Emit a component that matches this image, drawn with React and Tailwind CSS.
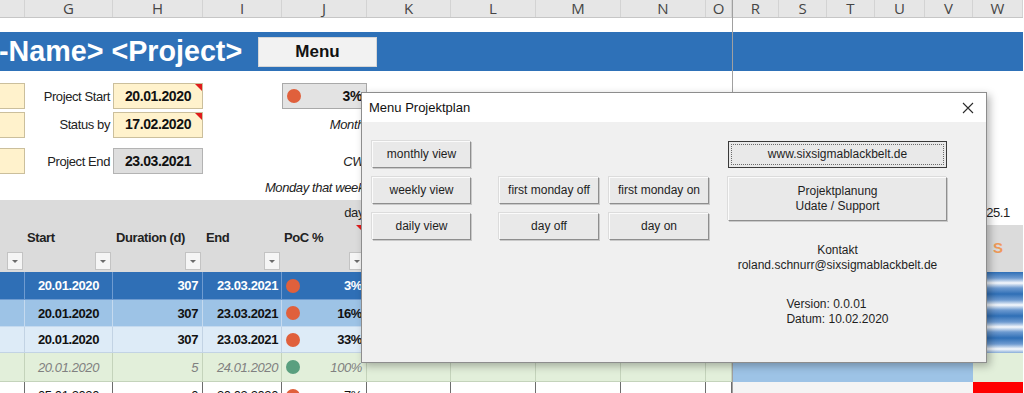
import clsx from "clsx";

const LEFT_COLS = [
  { id: "F", w: "w-[25px]" },
  { id: "G", w: "w-[88px]" },
  { id: "H", w: "w-[90px]" },
  { id: "I", w: "w-[79px]" },
  { id: "J", w: "w-[85px]" },
  { id: "K", w: "w-[84px]" },
  { id: "L", w: "w-[85px]" },
  { id: "M", w: "w-[85px]" },
  { id: "N", w: "w-[85px]" },
  { id: "O", w: "w-[26px]" },
];

const RIGHT_COLS = [
  { id: "R", w: "w-[46px]" },
  { id: "S", w: "w-[48px]" },
  { id: "T", w: "w-[48px]" },
  { id: "U", w: "w-[50px]" },
  { id: "V", w: "w-[48px]" },
  { id: "W", w: "w-[50px]" },
];

const ROWS = [
  {
    h: "h-[28px]",
    bg: "bg-[#2f6fb6]",
    line: "border-[#6f9bd0]",
    text: "text-white font-bold",
    start: "20.01.2020",
    dur: "307",
    end: "23.03.2021",
    dot: "bg-[#e0603c]",
    poc: "3%",
  },
  {
    h: "h-[27px]",
    bg: "bg-[#9dc3e6]",
    line: "border-[#c5daef]",
    text: "text-[#111] font-bold",
    start: "20.01.2020",
    dur: "307",
    end: "23.03.2021",
    dot: "bg-[#e0603c]",
    poc: "16%",
  },
  {
    h: "h-[26px]",
    bg: "bg-[#ddebf7]",
    line: "border-[#c2d3e4]",
    text: "text-[#111] font-bold",
    start: "20.01.2020",
    dur: "307",
    end: "23.03.2021",
    dot: "bg-[#e0603c]",
    poc: "33%",
  },
  {
    h: "h-[29px]",
    bg: "bg-[#e2efda]",
    line: "border-[#c4d3bb]",
    text: "text-[#808080] italic",
    start: "20.01.2020",
    dur: "5",
    end: "24.01.2020",
    dot: "bg-[#5a9f7f]",
    poc: "100%",
  },
  {
    h: "h-[28px]",
    bg: "bg-white",
    line: "border-[#6d6d6d]",
    text: "text-[#111]",
    start: "05.01.2020",
    dur: "0",
    end: "30.03.2020",
    dot: "bg-[#e0603c]",
    poc: "7%",
  },
];

const XL = "text-[13px] tracking-[-0.4px] leading-none";

function ColHeader({ cols }) {
  return (
    <div className="flex h-[18px] bg-[#e6e6e6] border-b border-[#c6c6c6]">
      {cols.map((c) => (
        <div
          key={c.id}
          className={clsx(
            c.w,
            "shrink-0 border-r border-[#d3d3d3] flex items-center justify-center text-[15px] leading-[17px] text-[#454545] font-['Open_Sans',sans-serif]"
          )}
        >
          {c.id === "F" ? "" : c.id}
        </div>
      ))}
    </div>
  );
}

function Flag() {
  return (
    <span className="absolute right-0 top-0 w-0 h-0 border-t-[7px] border-l-[7px] border-t-[#e01b1b] border-l-transparent" />
  );
}

function Box({ className, children, flag }) {
  return (
    <div
      className={clsx(
        "relative shrink-0 h-[26px] flex items-center justify-center border",
        className
      )}
    >
      {children}
      {flag && <Flag />}
    </div>
  );
}

function Label({ children }) {
  return (
    <div className={clsx("w-[88px] shrink-0 text-right pr-[3px] text-[#222]", XL)}>
      {children}
    </div>
  );
}

function FilterBtn() {
  return (
    <div className="w-[16px] h-[18px] bg-[#f5f5f5] border border-[#c3c3c3] flex items-center justify-center">
      <span className="w-0 h-0 border-l-[3px] border-r-[3px] border-t-[3px] border-l-transparent border-r-transparent border-t-[#6b6b6b]" />
    </div>
  );
}

function DataRow({ r }) {
  return (
    <div className={clsx("flex border-b", r.h, r.bg, r.line, r.text, XL)}>
      {LEFT_COLS.map((c, i) => (
        <div
          key={c.id}
          className={clsx(
            c.w,
            "shrink-0 h-full border-r flex items-center",
            r.line,
            i === 1 && "justify-center",
            i === 2 && "justify-end pr-[4px]",
            i === 3 && "justify-end pr-[3px]",
            i === 4 && "justify-between pl-[4px] pr-[4px]"
          )}
        >
          {i === 1 && r.start}
          {i === 2 && r.dur}
          {i === 3 && r.end}
          {i === 4 && (
            <>
              <span className={clsx("w-[14px] h-[14px] rounded-full", r.dot)} />
              <span>{r.poc}</span>
            </>
          )}
        </div>
      ))}
    </div>
  );
}

function WinButton({ className, children, focused }) {
  return (
    <div
      className={clsx(
        "relative flex items-center justify-center text-center bg-[#e9e9e9] text-[12px] leading-[15px] text-[#1e1e1e]",
        focused
          ? "border border-[#3a3a3a]"
          : "border border-t-[#fbfbfb] border-l-[#fbfbfb] border-r-[#8e8e8e] border-b-[#8e8e8e] shadow-[1px_1px_0_#c9c9c9,-1px_-1px_0_#dcdcdc]",
        className
      )}
    >
      {focused && (
        <span className="absolute inset-[2px] border border-dotted border-[#6a6a6a]" />
      )}
      <span className="relative">{children}</span>
    </div>
  );
}

function Dialog() {
  return (
    <div className="absolute left-[361px] top-[92px] w-[626px] h-[271px] bg-[#f0f0f0] border border-[#8d8d8d] shadow-[3px_3px_8px_rgba(0,0,0,0.28)]">
      <div className="h-[29px] bg-white flex items-center justify-between pl-[7px] pr-[12px]">
        <span className="text-[13px] text-[#111]">Menu Projektplan</span>
        <svg width="12" height="12" viewBox="0 0 12 12">
          <path d="M1 1 L11 11 M11 1 L1 11" stroke="#2b2b2b" strokeWidth="1.1" fill="none" />
        </svg>
      </div>
      <div className="flex pl-[10px] pt-[19px]">
        <div className="w-[99px] flex flex-col gap-[9px]">
          <WinButton className="h-[27px]">monthly view</WinButton>
          <WinButton className="h-[27px]">weekly view</WinButton>
          <WinButton className="h-[27px]">daily view</WinButton>
        </div>
        <div className="ml-[28px] w-[100px] pt-[36px] flex flex-col gap-[9px]">
          <WinButton className="h-[27px]">first monday off</WinButton>
          <WinButton className="h-[27px]">day off</WinButton>
        </div>
        <div className="ml-[10px] w-[100px] pt-[36px] flex flex-col gap-[9px]">
          <WinButton className="h-[27px]">first monday on</WinButton>
          <WinButton className="h-[27px]">day on</WinButton>
        </div>
        <div className="ml-[19px] w-[219px] flex flex-col items-center">
          <WinButton focused className="h-[27px] w-full">
            www.sixsigmablackbelt.de
          </WinButton>
          <WinButton className="h-[44px] w-full mt-[9px]">
            Projektplanung
            <br />
            Udate / Support
          </WinButton>
          <div className="mt-[22px] text-[12px] leading-[15px] text-[#1e1e1e] text-center">
            Kontakt
            <br />
            roland.schnurr@sixsigmablackbelt.de
          </div>
          <div className="mt-[24px] text-[12px] leading-[15px] text-[#1e1e1e] text-left">
            Version: 0.0.01
            <br />
            Datum: 10.02.2020
          </div>
        </div>
      </div>
    </div>
  );
}

function LeftPane() {
  return (
    <div className="w-[733px] shrink-0 border-r border-[#a0a0a0]">
      <ColHeader cols={LEFT_COLS} />
      <div className="h-[14px]" />
      <div className="h-[39px] bg-[#2e71b8] flex items-center">
        <div className="w-[259px] shrink-0 -ml-[1px] text-white font-bold text-[28.7px] leading-none whitespace-nowrap">
          -Name&gt; &lt;Project&gt;
        </div>
        <div className="w-[119px] h-[30px] bg-[#f2f2f2] border border-[#d6d6d6] flex items-center justify-center text-[17px] font-bold text-[#111]">
          Menu
        </div>
      </div>
      <div className="h-[11px]" />

      <div className="flex h-[28px] items-center">
        <Box className="w-[25px] bg-[#fff2cc] border-[#cbbf9c] border-l-0" />
        <Label>Project Start</Label>
        <Box flag className="w-[90px] bg-[#fff2cc] border-[#cbbf9c]">
          <span className="text-[14px] font-bold tracking-[-0.4px] text-[#111]">20.01.2020</span>
        </Box>
        <div className="w-[79px] shrink-0" />
        <div className="w-[85px] h-[26px] shrink-0 flex items-center justify-between px-[4px] bg-[#e3e3e3] border border-[#a9a9a9]">
          <span className="w-[14px] h-[14px] rounded-full bg-[#e0603c]" />
          <span className="text-[14px] font-bold tracking-[-0.4px] text-[#111]">3%</span>
        </div>
      </div>

      <div className="flex h-[29px] items-center">
        <Box className="w-[25px] bg-[#fff2cc] border-[#cbbf9c] border-l-0" />
        <Label>Status by</Label>
        <Box flag className="w-[90px] bg-[#fff2cc] border-[#cbbf9c]">
          <span className="text-[14px] font-bold tracking-[-0.4px] text-[#111]">17.02.2020</span>
        </Box>
        <div className="w-[79px] shrink-0" />
        <div className={clsx("w-[85px] shrink-0 text-right pr-[3px] italic text-[#222]", XL)}>
          Month
        </div>
      </div>

      <div className="h-[8px]" />

      <div className="flex h-[28px] items-center">
        <Box className="w-[25px] bg-[#fff2cc] border-[#cbbf9c] border-l-0" />
        <Label>Project End</Label>
        <Box className="w-[90px] bg-[#dedede] border-[#b3b3b3]">
          <span className="text-[14px] font-bold tracking-[-0.4px] text-[#111]">23.03.2021</span>
        </Box>
        <div className="w-[79px] shrink-0" />
        <div className={clsx("w-[85px] shrink-0 text-right pr-[3px] italic text-[#222]", XL)}>
          CW
        </div>
      </div>

      <div className="flex h-[25px] items-center">
        <div className={clsx("w-[367px] shrink-0 text-right pr-[3px] italic text-[#222]", XL)}>
          Monday that week
        </div>
      </div>

      <div className="bg-[#dbdbdb]">
        <div className="flex h-[25px] items-center">
          <div className={clsx("w-[367px] shrink-0 text-right pr-[3px] text-[#222]", XL)}>
            day
          </div>
        </div>
        <div className={clsx("flex h-[25px] items-center font-bold text-[#222]", XL)}>
          <div className="w-[25px] shrink-0" />
          <div className="w-[88px] shrink-0 pl-[2px]">Start</div>
          <div className="w-[90px] shrink-0 pl-[3px]">Duration (d)</div>
          <div className="w-[79px] shrink-0 pl-[3px]">End</div>
          <div className="relative w-[85px] shrink-0 h-full flex items-center pl-[2px]">
            PoC %
            <span className="absolute right-[6px] top-0 w-0 h-0 border-t-[5px] border-l-[5px] border-t-[#e01b1b] border-l-transparent" />
          </div>
        </div>
        <div className="flex h-[22px] items-center">
          {LEFT_COLS.slice(0, 5).map((c) => (
            <div key={c.id} className={clsx(c.w, "shrink-0 flex justify-end pr-[2px]")}>
              <FilterBtn />
            </div>
          ))}
        </div>
      </div>

      {ROWS.map((r, i) => (
        <DataRow key={i} r={r} />
      ))}
    </div>
  );
}

function RightPane() {
  return (
    <div className="w-[290px] shrink-0">
      <ColHeader cols={RIGHT_COLS} />
      <div className="h-[14px]" />
      <div className="h-[39px] bg-[#2e71b8]" />
      <div className="h-[129px]" />
      <div className="flex h-[25px] items-center">
        <div className="w-[240px] shrink-0" />
        <div className={clsx("w-[50px] text-center text-[#222]", XL)}>25.1</div>
      </div>
      <div className="flex h-[47px] items-center bg-[#dbdbdb]">
        <div className="w-[240px] shrink-0" />
        <div className="w-[50px] text-center text-[15px] font-bold text-[#ef9a5a]">S</div>
      </div>
      <div className="flex h-[81px]">
        <div className="w-[240px] shrink-0 bg-white" />
        <div className="w-[50px] bg-[repeating-linear-gradient(180deg,#2f6fb6_0px,#6d9ad0_6px,#f6f9fd_11px,#6d9ad0_16px,#2f6fb6_22px)]" />
      </div>
      <div className="flex h-[29px]">
        <div className="w-[240px] shrink-0 bg-[#9dc3e6]" />
        <div className="w-[50px] bg-[#e2efda]" />
      </div>
      <div className="flex h-[28px]">
        <div className="w-[240px] shrink-0 bg-[#f4f4f4]" />
        <div className="w-[50px] bg-[#ff0000]" />
      </div>
    </div>
  );
}

export default function App() {
  return (
    <div className="relative w-[1024px] h-[393px] overflow-hidden bg-white flex font-['Liberation_Sans',Arial,sans-serif]">
      <LeftPane />
      <RightPane />
      <Dialog />
    </div>
  );
}
